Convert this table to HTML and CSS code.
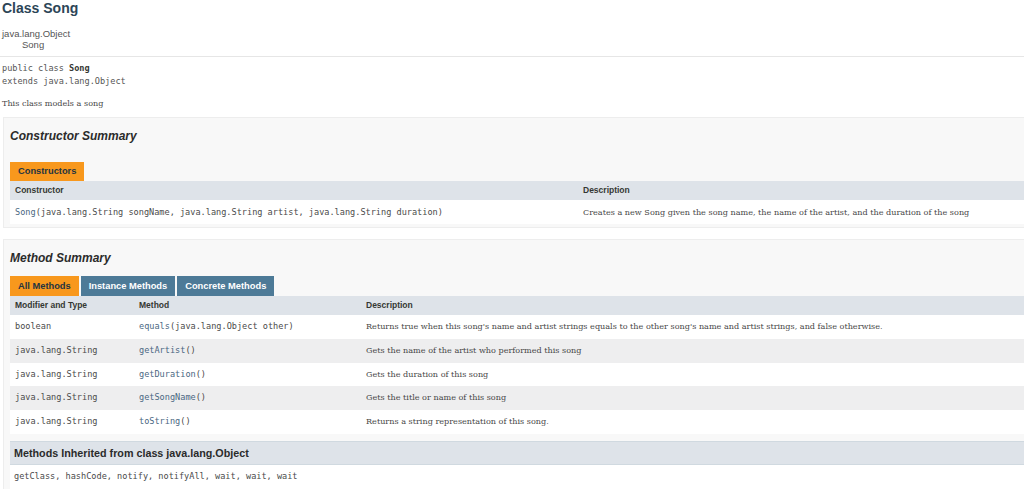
FILE: index.html
```html
<!DOCTYPE html>
<html lang="en">
<head>
<meta charset="utf-8">
<title>Song</title>
<link rel="stylesheet" href="styles.css">
</head>
<body>
<div class="page">
  <h1 class="title">Class Song</h1>
  <div class="inheritance">
    <div>java.lang.Object</div>
    <div class="sub">Song</div>
  </div>
  <hr class="rule">
  <pre class="decl">public class <b>Song</b>
extends java.lang.Object</pre>
  <p class="block">This class models a song</p>

  <section class="summary ctor">
    <h3 class="sum-title">Constructor Summary</h3>
    <div class="tabs ctor-tabs"><span class="tab active">Constructors</span></div>
    <div class="row ctor-cols head">
      <div class="cell">Constructor</div>
      <div class="cell">Description</div>
    </div>
    <div class="row ctor-cols body-row">
      <div class="cell code"><a class="link">Song</a>(java.lang.String&nbsp;songName, java.lang.String&nbsp;artist, java.lang.String&nbsp;duration)</div>
      <div class="cell desc">Creates a new Song given the song name, the name of the artist, and the duration of the song</div>
    </div>
  </section>

  <section class="summary meth">
    <h3 class="sum-title">Method Summary</h3>
    <div class="tabs meth-tabs">
      <span class="tab active">All Methods</span>
      <span class="tab">Instance Methods</span>
      <span class="tab">Concrete Methods</span>
    </div>
    <div class="row meth-cols head mhead">
      <div class="cell">Modifier and Type</div>
      <div class="cell">Method</div>
      <div class="cell">Description</div>
    </div>
    <div class="row meth-cols body-row mrow">
      <div class="cell code">boolean</div>
      <div class="cell code"><a class="link">equals</a>(java.lang.Object&nbsp;other)</div>
      <div class="cell desc">Returns true when this song's name and artist strings equals to the other song's name and artist strings, and false otherwise.</div>
    </div>
    <div class="row meth-cols body-row mrow alt">
      <div class="cell code">java.lang.String</div>
      <div class="cell code"><a class="link">getArtist</a>()</div>
      <div class="cell desc">Gets the name of the artist who performed this song</div>
    </div>
    <div class="row meth-cols body-row mrow">
      <div class="cell code">java.lang.String</div>
      <div class="cell code"><a class="link">getDuration</a>()</div>
      <div class="cell desc">Gets the duration of this song</div>
    </div>
    <div class="row meth-cols body-row mrow alt">
      <div class="cell code">java.lang.String</div>
      <div class="cell code"><a class="link">getSongName</a>()</div>
      <div class="cell desc">Gets the title or name of this song</div>
    </div>
    <div class="row meth-cols body-row mrow">
      <div class="cell code">java.lang.String</div>
      <div class="cell code"><a class="link">toString</a>()</div>
      <div class="cell desc">Returns a string representation of this song.</div>
    </div>
    <div class="inherited">
      <h3 class="inh-title">Methods Inherited from class java.lang.Object</h3>
      <div class="inh-list">getClass, hashCode, notify, notifyAll, wait, wait, wait</div>
    </div>
  </section>
</div>
</body>
</html>
```

FILE: styles.css
```css
html, body {
  margin: 0;
  padding: 0;
  overflow: hidden;
  background: #ffffff;
}

body {
  font-family: "Liberation Sans", Arial, sans-serif;
  color: #3d3d3d;
  width: 1024px;
  height: 489px;
}

.page {
  width: 1140px;
}

.title {
  margin: 0;
  padding-left: 2px;
  font-size: 14px;
  line-height: 16px;
  font-weight: bold;
  color: #2c4557;
}

.inheritance {
  margin-top: 12px;
  padding-left: 2px;
  font-size: 9.5px;
  line-height: 11px;
  color: #555555;
}

.inheritance .sub {
  padding-left: 20px;
}

.rule {
  margin: 6px 0 0;
  border: 0;
  border-top: 1px solid #e6e6e6;
  height: 0;
}

.decl {
  margin: 5px 0 0;
  padding-left: 2px;
  font-family: "DejaVu Sans Mono", monospace;
  font-size: 8.57px;
  line-height: 13px;
  color: #555555;
}

.decl b {
  color: #353833;
}

.block {
  margin: 9px 0 0;
  padding-left: 2px;
  font-family: "DejaVu Serif", serif;
  font-size: 8.1px;
  line-height: 12px;
  color: #474747;
}

.summary {
  margin-left: 3px;
  border: 1px solid #ededed;
  background: #f8f8f8;
  padding: 0 0 3px 6px;
}

.ctor {
  margin-top: 8px;
}

.meth {
  margin-top: 11px;
}

.sum-title {
  margin: 11px 0 0;
  font-size: 12px;
  line-height: 14px;
  font-style: italic;
  font-weight: bold;
  color: #2b2b2b;
}

.tabs {
  display: flex;
  gap: 2px;
}

.ctor-tabs {
  margin-top: 19px;
}

.meth-tabs {
  margin-top: 11px;
}

.tab {
  padding: 0 8px;
  height: 19px;
  line-height: 19px;
  font-size: 9.3px;
  font-weight: bold;
  color: #ffffff;
  background: #4d7a97;
}

.meth-tabs .tab {
  height: 20px;
  line-height: 20px;
}

.tab.active {
  background: #f8981d;
  color: #253441;
}

.row {
  display: grid;
}

.ctor-cols {
  grid-template-columns: 568px 1fr;
}

.meth-cols {
  grid-template-columns: 124px 227px 1fr;
}

.cell {
  padding: 0 5px;
  white-space: nowrap;
}

.head {
  background: #dee3e9;
  font-size: 8.5px;
  font-weight: bold;
  line-height: 19px;
  color: #353833;
}

.mhead {
  line-height: 19px;
}

.body-row {
  background: #ffffff;
  line-height: 24px;
}

.mrow {
  line-height: 23.8px;
}

.body-row.alt {
  background: #eeeeef;
}

.code {
  font-family: "DejaVu Sans Mono", monospace;
  font-size: 8.57px;
  color: #4a4a4a;
}

.link {
  color: #4a6782;
  text-decoration: none;
}

.desc {
  font-family: "DejaVu Serif", serif;
  font-size: 8.1px;
  color: #474747;
}

.inherited {
  margin-top: 7px;
}

.inh-title {
  margin: 0;
  padding: 0 4px;
  background: #dee3e9;
  border-top: 1px solid #d0d9e0;
  border-bottom: 1px solid #d0d9e0;
  font-size: 10.75px;
  line-height: 22px;
  font-weight: bold;
  color: #2b2b2b;
}

.inh-list {
  background: #ffffff;
  padding: 5px 4px 10px;
  font-family: "DejaVu Sans Mono", monospace;
  font-size: 8.57px;
  line-height: 13px;
  color: #4a4a4a;
}
```
